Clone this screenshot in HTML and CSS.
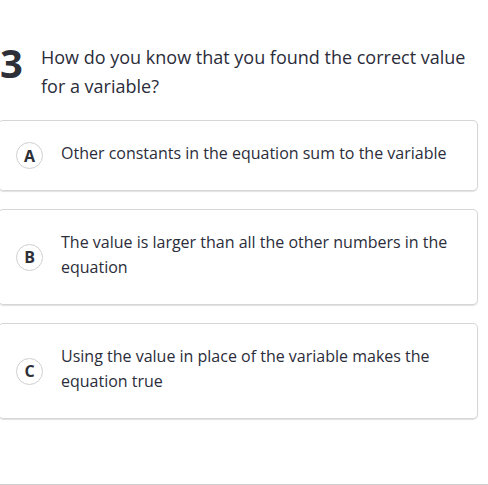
FILE: index.html
```html
<!DOCTYPE html>
<html>
<head>
<meta charset="utf-8">
<link rel="stylesheet" href="styles.css">
</head>
<body>
<div class="page">
  <div class="question">
    <div class="num">3</div>
    <div class="qtext">How do you know that you found the correct value for a variable?</div>
  </div>
  <div class="options">
    <div class="option">
      <span class="badge">A</span>
      <span class="otext">Other constants in the equation sum to the variable</span>
    </div>
    <div class="option">
      <span class="badge">B</span>
      <span class="otext">The value is larger than all the other numbers in the equation</span>
    </div>
    <div class="option">
      <span class="badge">C</span>
      <span class="otext">Using the value in place of the variable makes the equation true</span>
    </div>
  </div>
  <div class="footer"></div>
</div>
</body>
</html>
```
FILE: styles.css
```css
html, body {
  margin: 0;
  padding: 0;
  background: #fff;
}
body {
  font-family: "Open Sans", "Liberation Sans", sans-serif;
  color: #2b2d3a;
  overflow: hidden;
}
.page {
  width: 488px;
  height: 485px;
  display: flex;
  flex-direction: column;
  padding-top: 43px;
  box-sizing: border-box;
}
.question {
  display: flex;
  align-items: flex-start;
}
.num {
  font-size: 40px;
  font-weight: 700;
  line-height: 40px;
  width: 41px;
  flex: none;
  color: #2e3038;
}
.qtext {
  font-size: 18px;
  line-height: 29px;
  padding-right: 14px;
}
.options {
  display: flex;
  flex-direction: column;
  gap: 18px;
  margin: 19px 10px 0 -2px;
}
.option {
  display: flex;
  align-items: center;
  border: 1px solid #d6d6d6;
  border-radius: 5px;
  box-shadow: 0 1px 1px rgba(0, 0, 0, 0.12);
  padding: 20px 12px 20px 17px;
}
.badge {
  flex: none;
  width: 25px;
  height: 25px;
  border: 1px solid #cfcfcf;
  border-radius: 50%;
  display: flex;
  align-items: center;
  justify-content: center;
  font-size: 16px;
  font-weight: 700;
  margin-right: 18px;
  color: #2e3038;
}
.otext {
  font-size: 16px;
  line-height: 25px;
  margin-bottom: 4px;
}
.footer {
  margin-top: auto;
  border-top: 2px solid #d0d0d0;
  height: 0;
  margin-bottom: -1px;
}
```
